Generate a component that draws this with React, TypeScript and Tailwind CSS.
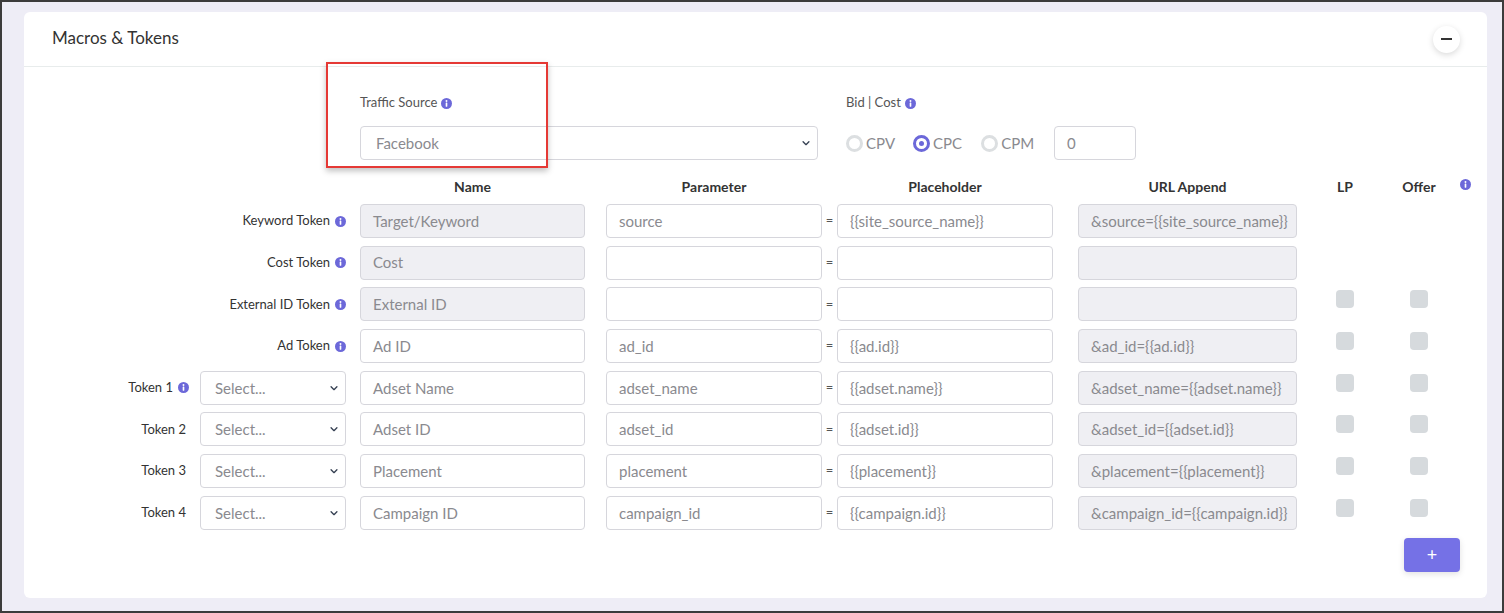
import React from 'react';

const Info = ({ className = '' }: { className?: string }) => (
  <svg viewBox="0 0 16 16" className={`inline-block w-[11px] h-[11px] ${className}`}>
    <circle cx="8" cy="8" r="8" fill="#6c68d9" />
    <circle cx="8" cy="4.3" r="1.4" fill="#fff" />
    <rect x="6.8" y="6.6" width="2.4" height="6" rx="0.6" fill="#fff" />
  </svg>
);

const Chevron = () => (
  <svg viewBox="0 0 12 12" className="w-[10px] h-[10px] text-gray-700">
    <path d="M2.5 4.5 6 8l3.5-3.5" fill="none" stroke="currentColor" strokeWidth="1.6" strokeLinecap="round" strokeLinejoin="round" />
  </svg>
);

const Field = ({ value, w, gray }: { value: string; w: string; gray?: boolean }) => (
  <div className={`${w} h-[34px] rounded border border-[#d6d6dc] flex items-center px-3 text-[15px] text-[#8a8a8f] overflow-hidden whitespace-nowrap ${gray ? 'bg-[#efeff3]' : 'bg-white'}`}>
    {value}
  </div>
);

const Select = ({ value, w }: { value: string; w: string }) => (
  <div className={`${w} h-[34px] rounded border border-[#d6d6dc] bg-white flex items-center justify-between pl-[14px] pr-[6px] text-[15px] text-[#8a8a8f]`}>
    <span>{value}</span>
    <Chevron />
  </div>
);

const Check = () => <div className="w-[18px] h-[18px] rounded bg-[#d6dadd]" />;

type Row = { label: string; info?: boolean; select?: boolean; name: string; nameGray?: boolean; param: string; ph: string; url: string; checks: boolean };

const rows: Row[] = [
  { label: 'Keyword Token', info: true, name: 'Target/Keyword', nameGray: true, param: 'source', ph: '{{site_source_name}}', url: '&source={{site_source_name}}', checks: false },
  { label: 'Cost Token', info: true, name: 'Cost', nameGray: true, param: '', ph: '', url: '', checks: false },
  { label: 'External ID Token', info: true, name: 'External ID', nameGray: true, param: '', ph: '', url: '', checks: true },
  { label: 'Ad Token', info: true, name: 'Ad ID', param: 'ad_id', ph: '{{ad.id}}', url: '&ad_id={{ad.id}}', checks: true },
  { label: 'Token 1', info: true, select: true, name: 'Adset Name', param: 'adset_name', ph: '{{adset.name}}', url: '&adset_name={{adset.name}}', checks: true },
  { label: 'Token 2', select: true, name: 'Adset ID', param: 'adset_id', ph: '{{adset.id}}', url: '&adset_id={{adset.id}}', checks: true },
  { label: 'Token 3', select: true, name: 'Placement', param: 'placement', ph: '{{placement}}', url: '&placement={{placement}}', checks: true },
  { label: 'Token 4', select: true, name: 'Campaign ID', param: 'campaign_id', ph: '{{campaign.id}}', url: '&campaign_id={{campaign.id}}', checks: true },
];

const Radio = ({ label, on }: { label: string; on?: boolean }) => (
  <div className="flex items-center gap-[3px] text-[15px] text-[#8a8a8f]">
    <span className={`w-[17px] h-[17px] rounded-full flex items-center justify-center ${on ? 'border-[3px] border-[#6c68d9]' : 'border-[3px] border-[#dcdfe1]'}`}>
      {on && <span className="w-[5px] h-[5px] rounded-full bg-[#6c68d9]" />}
    </span>
    {label}
  </div>
);

export default function App() {
  return (
    <div className="w-[1504px] h-[613px] bg-[#eeedf6] border-2 border-[#3c3c3c] pt-[10px] pl-[22px] pr-[15px] text-[#333]" style={{ fontFamily: 'Lato, "Noto Sans", sans-serif' }}>
      <div className="relative bg-white rounded-md h-[586px]">
        <div className="h-[55px] border-b border-[#e8ecec] flex items-center justify-between pl-[28px] pr-[27px]">
          <h2 className="text-[17px] text-[#333] pb-[2px]">Macros &amp; Tokens</h2>
          <button className="w-[27px] h-[27px] rounded-full bg-white shadow-[0_2px_6px_rgba(0,0,0,0.15)] flex items-center justify-center">
            <span className="w-[11px] h-[2px] bg-[#333]" />
          </button>
        </div>

        <div className="flex pt-[28px] pl-[336px]">
          <div className="w-[458px]">
            <div className="text-[13px] text-[#555] flex items-center gap-1 h-[16px]">Traffic Source <Info /></div>
            <div className="mt-[15px] h-[34px] rounded border border-[#d6d6dc] flex items-center justify-between pl-[15px] pr-[6px] text-[15px] text-[#8a8a8f]">
              <span>Facebook</span>
              <Chevron />
            </div>
          </div>
          <div className="ml-[28px]">
            <div className="text-[13px] text-[#555] flex items-center gap-1 h-[16px]">Bid | Cost <Info /></div>
            <div className="mt-[15px] flex items-center h-[34px]">
              <Radio label="CPV" />
              <div className="ml-[18px]"><Radio label="CPC" on /></div>
              <div className="ml-[19px]"><Radio label="CPM" /></div>
              <div className="ml-[20px]"><Field value="0" w="w-[82px]" /></div>
            </div>
          </div>
        </div>

        <div className="flex items-center mt-[16px] text-[14px] font-bold text-[#333] h-[20px]">
          <div className="w-[336px]" />
          <div className="w-[225px] text-center">Name</div>
          <div className="w-[21px]" />
          <div className="w-[216px] text-center">Parameter</div>
          <div className="w-[15px]" />
          <div className="w-[216px] text-center">Placeholder</div>
          <div className="w-[25px]" />
          <div className="w-[219px] text-center">URL Append</div>
          <div className="w-[96px] text-center">LP</div>
          <div className="w-[52px] text-center">Offer</div>
          <div className="w-[40px] text-center -mt-[6px]"><Info /></div>
        </div>

        <div className="mt-[8px] flex flex-col gap-[7.7px]">
          {rows.map((r) => (
            <div key={r.label} className="flex items-center">
              <div className="w-[336px] flex items-center justify-end pr-[14px] text-[13px] text-[#333]">
                <span className="flex items-center gap-[5px]">{r.label}{r.info && <Info />}</span>
                {r.select && <div className={r.info ? 'ml-[11px]' : 'ml-[14px]'}><Select value="Select..." w="w-[146px]" /></div>}
              </div>
              <Field value={r.name} w="w-[225px]" gray={r.nameGray} />
              <div className="w-[21px]" />
              <Field value={r.param} w="w-[216px]" />
              <div className="w-[15px] text-center text-[13px] text-[#555]">=</div>
              <Field value={r.ph} w="w-[216px]" />
              <div className="w-[25px]" />
              <Field value={r.url} w="w-[219px]" gray />
              <div className="w-[96px] flex justify-center -mt-[10px]">{r.checks && <Check />}</div>
              <div className="w-[52px] flex justify-center -mt-[10px]">{r.checks && <Check />}</div>
            </div>
          ))}
        </div>

        <div className="flex justify-end pr-[27px] mt-[8px]">
          <button className="w-[56px] h-[34px] rounded bg-[#7571e6] text-white text-[18px] shadow-[0_2px_6px_rgba(0,0,0,0.12)]">+</button>
        </div>

        <div className="absolute left-[302px] top-[50px] w-[222px] h-[106px] border-2 border-[#e53935] shadow-[0_3px_6px_rgba(0,0,0,0.25)] pointer-events-none" />
      </div>
    </div>
  );
}
